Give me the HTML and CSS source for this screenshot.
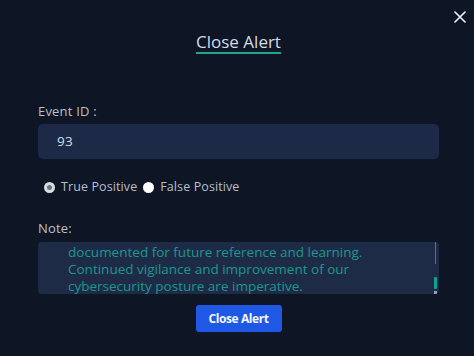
FILE: index.html
```html
<!DOCTYPE html>
<html>
<head>
<meta charset="utf-8">
<link rel="stylesheet" href="styles.css">
</head>
<body>
<div class="modal">
  <button class="close-x" aria-label="Close">
    <svg width="12" height="12" viewBox="0 0 12 12"><path d="M1 1L11 11M11 1L1 11" stroke="#f2f4f8" stroke-width="1.6" stroke-linecap="round"/></svg>
  </button>
  <h2 class="title">Close Alert</h2>
  <label class="label label-event">Event ID :</label>
  <div class="input">93</div>
  <div class="radios">
    <label class="radio"><span class="dot checked"></span>True Positive</label>
    <label class="radio"><span class="dot"></span>False Positive</label>
  </div>
  <label class="label label-note">Note:</label>
  <div class="note">
    <div class="note-text">this incident was handled with care and it was<br>documented for future reference and learning.<br>Continued vigilance and improvement of our<br>cybersecurity posture are imperative.</div>
    <div class="scroll-track"></div>
    <div class="scroll-thumb"></div>
    <div class="scroll-btn"></div>
  </div>
  <div class="actions"><button class="btn">Close Alert</button></div>
</div>
</body>
</html>
```
FILE: styles.css
```css
html, body { margin: 0; padding: 0; }
body {
  background: #0e1524;
  width: 474px;
  height: 356px;
  overflow: hidden;
  font-family: "Open Sans", "Noto Sans", sans-serif;
}
.modal {
  position: relative;
  padding: 32px 35px 0 38px;
  display: flex;
  flex-direction: column;
}
.close-x {
  position: absolute;
  top: 11px;
  right: 8px;
  background: none;
  border: 0;
  padding: 0;
  width: 12px;
  height: 12px;
  display: flex;
}
.title {
  margin: 0 auto;
  font-weight: 400;
  font-size: 17px;
  line-height: 20px;
  color: #d3dbe6;
  padding-bottom: 0;
  border-bottom: 2px solid #1fa590;
}
.label {
  display: block;
  font-size: 13px;
  line-height: 16px;
  color: #b9c1cd;
  letter-spacing: 0.2px;
}
.label-event { margin-top: 49px; }
.input {
  margin-top: 5px;
  height: 35px;
  background: #1d2a47;
  border-radius: 5px;
  color: #d5dcea;
  font-size: 13.5px;
  line-height: 35px;
  padding-left: 19px;
  letter-spacing: 0.3px;
}
.radios {
  display: flex;
  gap: 6px;
  margin-top: 19px;
  padding-left: 6px;
}
.radio {
  display: flex;
  align-items: center;
  gap: 6px;
  font-size: 12.5px;
  line-height: 18px;
  color: #b6bfcc;
  letter-spacing: 0.1px;
}
.dot {
  width: 11px;
  height: 11px;
  border-radius: 50%;
  background: #ffffff;
  box-sizing: border-box;
}
.dot.checked {
  border: 3px solid #d9dde3;
  background: #6b7280;
}
.label-note { margin-top: 24px; }
.note {
  position: relative;
  margin-top: 6px;
  height: 52px;
  background: #1e2b47;
  border-radius: 4px;
  overflow: hidden;
  display: flex;
  flex-direction: column;
  justify-content: flex-end;
}
.note-text {
  padding: 0 20px 0 30px;
  margin-bottom: -1px;
  font-size: 13.5px;
  line-height: 17px;
  color: #1c978e;
  letter-spacing: 0px;
  white-space: nowrap;
}
.scroll-track {
  position: absolute;
  right: 3px;
  top: 0;
  width: 1px;
  height: 22px;
  background: #1f8f85;
}
.scroll-thumb {
  position: absolute;
  right: 2px;
  top: 35px;
  width: 3px;
  height: 12px;
  border-radius: 1px;
  background: #13a28d;
}
.scroll-btn {
  position: absolute;
  right: 2px;
  bottom: 0;
  width: 3px;
  height: 3px;
  background: #9aa3b5;
}
.actions {
  display: flex;
  justify-content: center;
  margin-top: 11px;
}
.btn {
  width: 86px;
  height: 27px;
  border: 0;
  border-radius: 3px;
  background: #1e58e4;
  color: #f4f7ff;
  font-family: "Open Sans", sans-serif;
  font-weight: 700;
  font-size: 12px;
  letter-spacing: -0.4px;
  padding: 0;
}
```
